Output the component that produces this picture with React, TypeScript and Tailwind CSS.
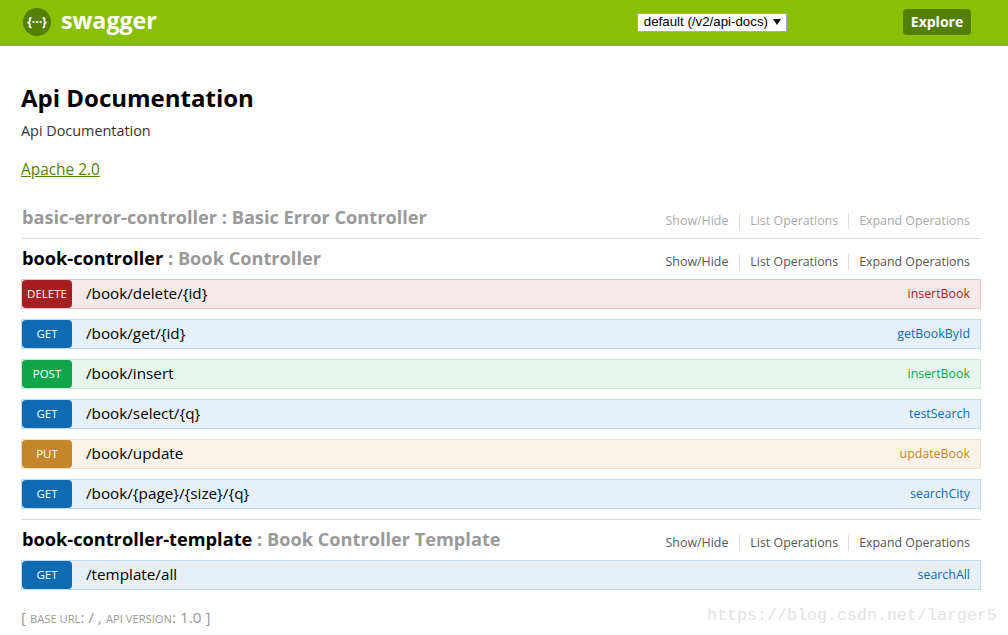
import React from 'react';

type Method = 'GET' | 'POST' | 'PUT' | 'DELETE';

interface Op {
  method: Method;
  path: string;
  name: string;
}

const styles: Record<Method, { row: string; badge: string; name: string }> = {
  GET: { row: 'bg-[#e7f0f7] border-[#c3d9ec]', badge: 'bg-[#0f6ab4]', name: 'text-[#0f6ab4]' },
  POST: { row: 'bg-[#e7f6ec] border-[#c3e8d1]', badge: 'bg-[#10a54a]', name: 'text-[#10a54a]' },
  PUT: { row: 'bg-[#f9f2e9] border-[#f0e0ca]', badge: 'bg-[#c5862b]', name: 'text-[#c5862b]' },
  DELETE: { row: 'bg-[#f5e8e8] border-[#e8c6c7]', badge: 'bg-[#a41e22]', name: 'text-[#a41e22]' },
};

const bookOps: Op[] = [
  { method: 'DELETE', path: '/book/delete/{id}', name: 'insertBook' },
  { method: 'GET', path: '/book/get/{id}', name: 'getBookById' },
  { method: 'POST', path: '/book/insert', name: 'insertBook' },
  { method: 'GET', path: '/book/select/{q}', name: 'testSearch' },
  { method: 'PUT', path: '/book/update', name: 'updateBook' },
  { method: 'GET', path: '/book/{page}/{size}/{q}', name: 'searchCity' },
];

const templateOps: Op[] = [{ method: 'GET', path: '/template/all', name: 'searchAll' }];

const Logo = () => (
  <div className="ml-px w-[28px] h-[28px] rounded-full bg-[#547f00] flex items-center justify-center text-white text-[12px] font-bold leading-none">
    {'{···}'}
  </div>
);

const OpRow = ({ op }: { op: Op }) => {
  const s = styles[op.method];
  return (
    <div className={`h-[30px] flex items-center border pr-[10px] ${s.row}`}>
      <div className={`w-[50px] h-[28px] rounded-sm flex items-center justify-center text-white text-[11.5px] font-medium ${s.badge}`}>
        {op.method}
      </div>
      <div className="ml-[14px] pb-[2px] text-[15.25px] text-black">{op.path}</div>
      <div className={`ml-auto text-[12.4px] ${s.name}`}>{op.name}</div>
    </div>
  );
};

const Section = ({
  name,
  title,
  faded,
  border,
  ops,
}: {
  name: string;
  title: string;
  faded?: boolean;
  border?: boolean;
  ops?: Op[];
}) => (
  <div className={border ? 'border-b border-[#ddd]' : ''}>
    <div className="h-[40px] pl-px flex items-center justify-between">
      <div className="text-[18.2px] font-bold whitespace-nowrap text-[#999]">
        <span className={faded ? '' : 'text-black'}>{name}</span> : {title}
      </div>
      <div className={`flex items-center text-[12.4px] pr-[11px] pt-[6px] ${faded ? 'text-[#aaa]' : 'text-[#555]'}`}>
        <span className="pr-[11px] border-r border-[#ddd] leading-[16px]">Show/Hide</span>
        <span className="px-[10px] border-r border-[#ddd] leading-[16px]">List Operations</span>
        <span className="pl-[10px] leading-[16px]">Expand Operations</span>
      </div>
    </div>
    {ops && (
      <div className="flex flex-col gap-[10px]">
        {ops.map((op, i) => (
          <OpRow key={i} op={op} />
        ))}
      </div>
    )}
  </div>
);

export default function App() {
  return (
    <div className="relative w-[1008px] h-[635px] overflow-hidden bg-white font-['Open_Sans',sans-serif]">
      <header className="h-[46px] bg-[#89bf04] flex items-center pb-[2px] pl-[22px] pr-[37px]">
        <Logo />
        <span className="ml-[10px] pb-[2px] text-[23.2px] font-bold text-white leading-none">swagger</span>
        <div className="relative ml-[480px] w-[150px] h-[19px] bg-white border border-[#aaa] flex items-center pl-[6px] text-[13.3px] text-black font-['Liberation_Sans',sans-serif]">
          default (/v2/api-docs)
          <svg className="absolute right-[5px] top-[4px]" width="8" height="8" viewBox="0 0 8 8">
            <path d="M0 1h8L4 7z" fill="#111" />
          </svg>
        </div>
        <button className="ml-auto w-[68px] h-[26px] pb-[2px] rounded bg-[#547f00] text-white text-[14px] font-bold">Explore</button>
      </header>

      <main className="px-[21px] w-[981px] box-content">
        <div className="w-[960px]">
          <h1 className="pt-[35px] text-[24px] leading-[34px] font-bold text-black">Api Documentation</h1>
          <p className="mt-[6px] text-[14.4px] leading-[19px] text-[#333]">Api Documentation</p>
          <a className="block mt-[19px] text-[15.4px] leading-[22px] text-[#547f00] underline" href="#">
            Apache 2.0
          </a>

          <div className="mt-[17px]">
            <Section name="basic-error-controller" title="Basic Error Controller" faded border />
            <Section name="book-controller" title="Book Controller" ops={bookOps} />
            <div className="mt-[10px] border-t border-[#ddd]">
              <Section name="book-controller-template" title="Book Controller Template" ops={templateOps} />
            </div>
          </div>

          <div className="mt-[17px] text-[#999] text-[15.3px] leading-[20px]">
            [ <span className="text-[11.2px] uppercase">base url</span>: / ,{' '}
            <span className="text-[11.2px] uppercase">api version</span>: 1.0 ]
          </div>
        </div>
      </main>

      <div className="absolute left-[707px] top-[605px] text-[16.67px] leading-[22px] whitespace-nowrap text-[#e2e2e2] font-['Liberation_Mono',monospace]">
        https://blog.csdn.net/larger5
      </div>
    </div>
  );
}
